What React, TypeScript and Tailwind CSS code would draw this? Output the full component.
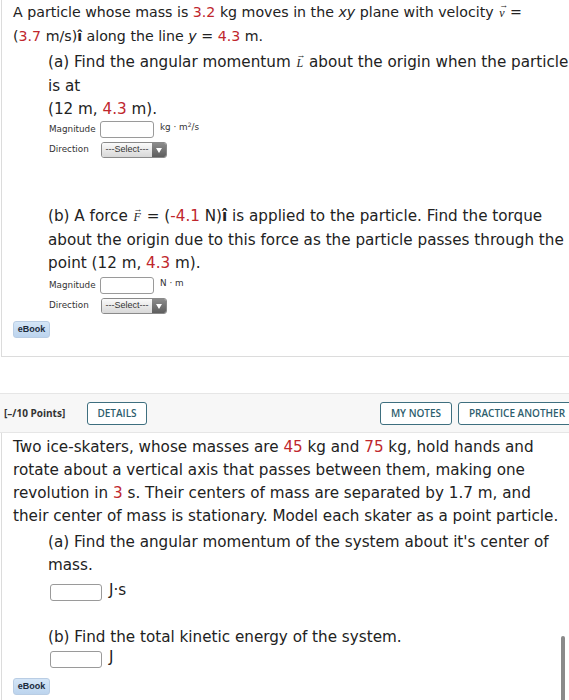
import React from "react";

const body1 = "font-['DejaVu_Sans',Verdana,sans-serif] text-[14.2px] leading-[23px] text-[#222] whitespace-nowrap";
const body2 = "font-['DejaVu_Sans',Verdana,sans-serif] text-[15.2px] leading-[23px] text-[#222] whitespace-nowrap";
const small = "font-['DejaVu_Sans',Verdana,sans-serif] text-[8.8px] text-[#333] whitespace-nowrap";

function R({ children }: { children: React.ReactNode }) {
  return <span className="text-[#c0272d]">{children}</span>;
}

function Vec({ c }: { c: string }) {
  return (
    <span className="relative inline-block font-['Liberation_Serif',serif] italic text-[12px] px-[1px]">
      {c}
      <span className="absolute left-[1px] top-[-8px] text-[9px] not-italic">→</span>
    </span>
  );
}

function Input({ w = "w-[54px]" }: { w?: string }) {
  return <span className={`inline-block ${w} h-[17px] shrink-0 border border-[#9a9a9a] rounded-[3px] bg-white`} />;
}

function Select() {
  return (
    <span className="inline-flex h-[16px] w-[66px] items-stretch rounded-[3px] border border-[#8a8a8a] overflow-hidden">
      <span className="flex flex-1 items-center justify-center bg-gradient-to-b from-[#fafafa] to-[#d8d8d8] text-[9px] text-[#333] font-['Liberation_Sans',sans-serif]">
        ---Select---
      </span>
      <span className="flex w-[14px] items-center justify-center bg-gradient-to-b from-[#8c8c8c] to-[#5e5e5e]">
        <svg width="6" height="5" viewBox="0 0 6 5"><path d="M0 0h6L3 5z" fill="#fff" /></svg>
      </span>
    </span>
  );
}

function EBook() {
  return (
    <div className="flex h-[17px] w-[37px] items-center justify-center rounded-[3px] bg-gradient-to-b from-[#d5e6f7] to-[#bcd4ee] border border-[#b9cde4] font-['Liberation_Sans',sans-serif] text-[9px] font-bold text-[#1b2b3b]">
      eBook
    </div>
  );
}

function HBtn({ children, cls = "" }: { children: React.ReactNode; cls?: string }) {
  return (
    <div className={`flex h-[23px] shrink-0 items-center justify-center whitespace-nowrap rounded-[3px] border-[1.5px] border-[#3e6f7f] bg-white font-['Open_Sans',sans-serif] text-[10px] font-semibold text-[#2d5d6d] ${cls}`}>
      {children}
    </div>
  );
}

export default function App() {
  return (
    <div className="w-[569px] h-[700px] overflow-hidden bg-white relative">
      {/* question 1 */}
      <div className="ml-[1px] border-l border-b border-[#dcdcdc] pl-[11px] pt-[1px] h-[357px]">
        <div className={body1}>
          A particle whose mass is <R>3.2</R> kg moves in the <i>xy</i> plane with velocity <Vec c="v" /> =
          <br />(<R>3.7</R> m/s)<b>î</b> along the line <i>y</i> = <R>4.3</R> m.
        </div>
        <div className="pl-[35px] mt-[3px]">
          <div className={body2}>
            (a) Find the angular momentum <Vec c="L" /> about the origin when the particle
            <br />is at
            <br />(12 m, <R>4.3</R> m).
          </div>
          <div className="flex items-center gap-[2px] pl-[1px]">
            <span className={`${small} w-[49px]`}>Magnitude</span>
            <Input />
            <span className={`${small} ml-[4px] -mt-[4px]`}>
              kg · m<sup className="text-[6px]">2</sup>/s
            </span>
          </div>
          <div className="mt-[4px] flex items-center gap-[2px] pl-[1px]">
            <span className={`${small} w-[50px]`}>Direction</span>
            <Select />
          </div>
          <div className={`${body2} mt-[47px]`}>
            (b) A force <Vec c="F" /> = (<R>-4.1</R> N)<b>î</b> is applied to the particle. Find the torque
            <br />about the origin due to this force as the particle passes through the
            <br />point (12 m, <R>4.3</R> m).
          </div>
          <div className="mt-[2px] flex items-center gap-[2px] pl-[1px]">
            <span className={`${small} w-[49px]`}>Magnitude</span>
            <Input />
            <span className={`${small} ml-[4px] -mt-[4px]`}>N · m</span>
          </div>
          <div className="mt-[4px] flex items-center gap-[2px] pl-[1px]">
            <span className={`${small} w-[50px]`}>Direction</span>
            <Select />
          </div>
        </div>
        <div className="mt-[7px]">
          <EBook />
        </div>
      </div>

      {/* header bar */}
      <div className="mt-[36px] flex h-[40px] items-center border-t border-b border-[#e6e6e6] bg-[#f7f7f7] pl-[4px]">
        <span className="w-[83px] shrink-0 font-['Open_Sans',sans-serif] text-[10px] font-bold text-[#333] whitespace-nowrap">[–/10 Points]</span>
        <HBtn cls="w-[60px]">DETAILS</HBtn>
        <HBtn cls="ml-auto w-[72px]">MY NOTES</HBtn>
        <HBtn cls="ml-[6px] w-[118px] -mr-[7px]">PRACTICE ANOTHER</HBtn>
      </div>

      {/* question 2 */}
      <div className="ml-[1px] border-l border-[#dcdcdc] pl-[11px] pt-[3px] h-[300px]">
        <div className={body2}>
          Two ice-skaters, whose masses are <R>45</R> kg and <R>75</R> kg, hold hands and
          <br />rotate about a vertical axis that passes between them, making one
          <br />revolution in <R>3</R> s. Their centers of mass are separated by 1.7 m, and
          <br />their center of mass is stationary. Model each skater as a point particle.
        </div>
        <div className="pl-[35px] mt-[3px]">
          <div className={body2}>
            (a) Find the angular momentum of the system about it's center of
            <br />mass.
          </div>
          <div className="mt-[6px] flex items-center gap-[7px] pl-[2px]">
            <Input w="w-[52px]" />
            <span className={`${body2} leading-[17px] -mt-[4px]`}>J·s</span>
          </div>
          <div className={`${body2} mt-[24px]`}>(b) Find the total kinetic energy of the system.</div>
          <div className="mt-[1px] flex items-center gap-[7px] pl-[2px]">
            <Input w="w-[52px]" />
            <span className={`${body2} leading-[17px] -mt-[4px]`}>J</span>
          </div>
        </div>
        <div className="mt-[9px]">
          <EBook />
        </div>
      </div>

      <div className="absolute left-[561px] top-[636px] h-[70px] w-[4px] rounded-full bg-[#8a8a8a]" />
    </div>
  );
}
